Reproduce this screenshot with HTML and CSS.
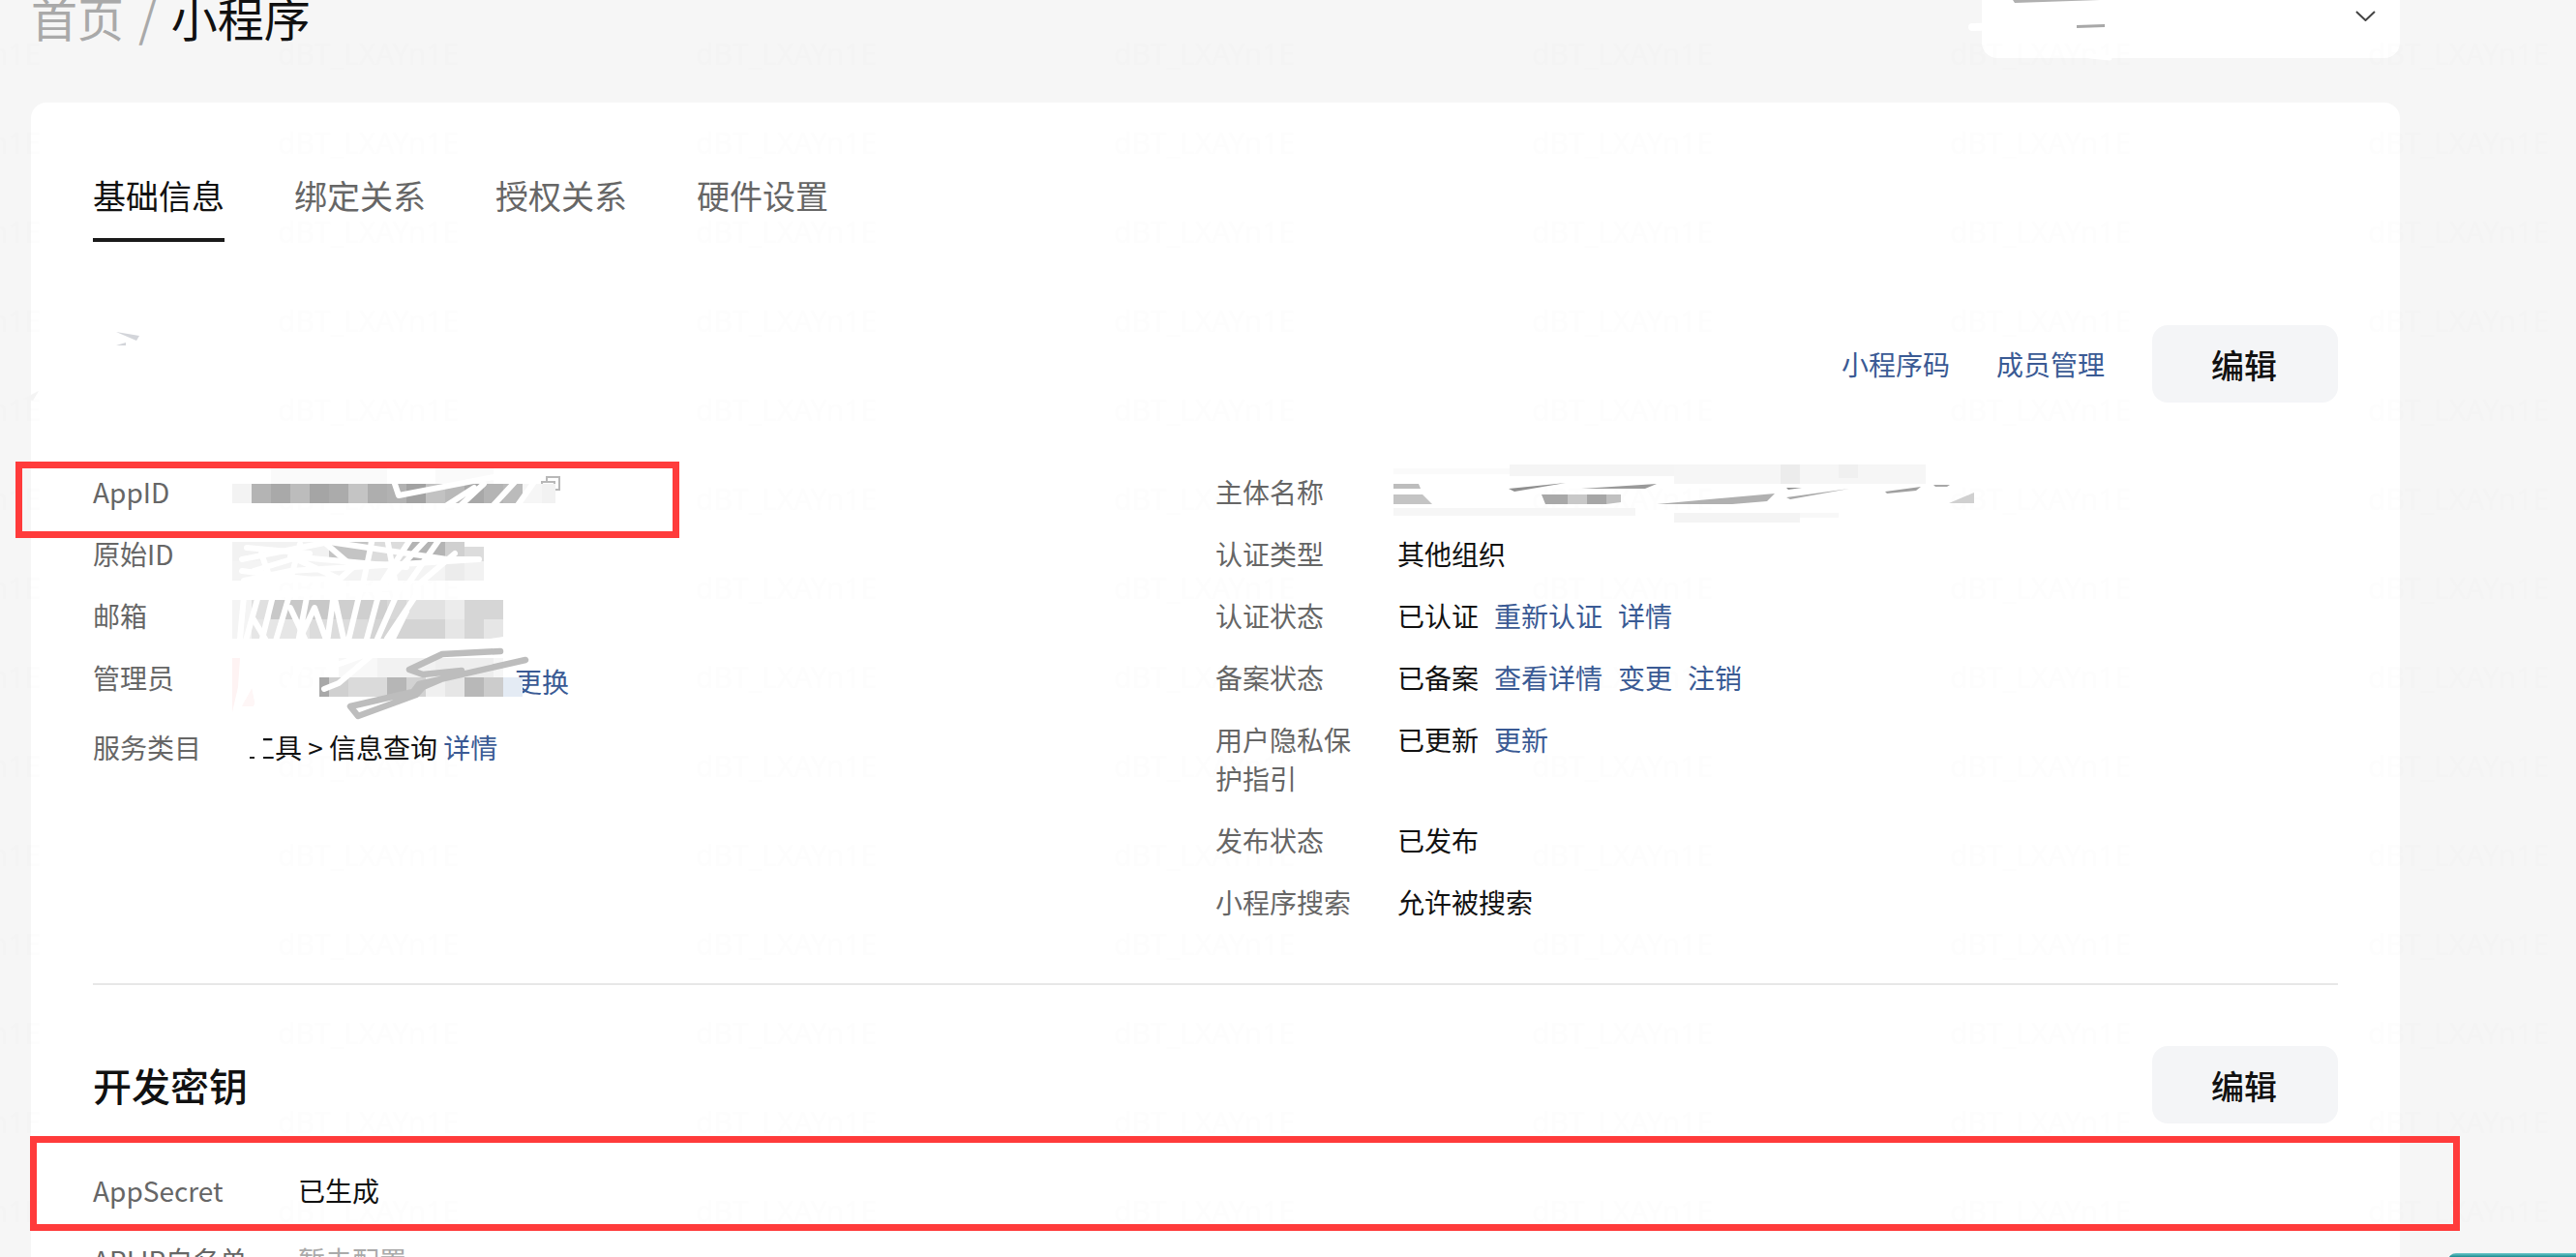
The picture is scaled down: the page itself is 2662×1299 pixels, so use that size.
FILE: index.html
```html
<!DOCTYPE html>
<html lang="zh-CN">
<head>
<meta charset="utf-8">
<title>小程序</title>
<link rel="stylesheet" href="styles.css">
</head>
<body>
<div class="page">
  <header class="topbar">
    <div class="crumb"><span class="crumb-home">首页</span><span class="crumb-sep">/</span><span class="crumb-now">小程序</span></div>
    <div class="select">
      <svg class="chevron" viewBox="0 0 21 11" width="21" height="11"><path d="M1 1l9.500 9L20 1" fill="none" stroke="#444" stroke-width="2"/></svg>
    </div>
  </header>
  <main class="card">
    <nav class="tabs">
      <a class="tab tab-active">基础信息</a>
      <a class="tab">绑定关系</a>
      <a class="tab">授权关系</a>
      <a class="tab">硬件设置</a>
    </nav>
    <div class="actions">
      <a class="link">小程序码</a>
      <a class="link">成员管理</a>
      <button class="btn btn-action">编辑</button>
    </div>
    <section class="info">
      <div class="col">
        <div class="row"><span class="label label-l">AppID</span><span class="value"></span></div>
        <div class="row"><span class="label label-l">原始ID</span><span class="value"></span></div>
        <div class="row"><span class="label label-l">邮箱</span><span class="value"></span></div>
        <div class="row row-admin"><span class="label label-l">管理员</span><span class="value value-admin"><a class="link">更换</a></span></div>
        <div class="row"><span class="label label-l">服务类目</span><span class="value value-cat">工具 &gt; 信息查询 <a class="link">详情</a></span></div>
      </div>
      <div class="col">
        <div class="row"><span class="label label-r">主体名称</span><span class="value"></span></div>
        <div class="row"><span class="label label-r">认证类型</span><span class="value">其他组织</span></div>
        <div class="row"><span class="label label-r">认证状态</span><span class="value">已认证<a class="link link-in">重新认证</a><a class="link link-in">详情</a></span></div>
        <div class="row"><span class="label label-r">备案状态</span><span class="value">已备案<a class="link link-in">查看详情</a><a class="link link-in">变更</a><a class="link link-in">注销</a></span></div>
        <div class="row"><span class="label label-r">用户隐私保护指引</span><span class="value">已更新<a class="link link-in">更新</a></span></div>
        <div class="row"><span class="label label-r">发布状态</span><span class="value">已发布</span></div>
        <div class="row"><span class="label label-r">小程序搜索</span><span class="value">允许被搜索</span></div>
      </div>
    </section>
    <hr class="divider">
    <div class="section-head">
      <h2 class="section-title">开发密钥</h2>
      <button class="btn">编辑</button>
    </div>
    <div class="keys">
      <div class="row row-key"><span class="label label-k">AppSecret</span><span class="value">已生成</span></div>
      <div class="row row-key"><span class="label label-k">API IP白名单</span><span class="value value-muted">暂未配置</span></div>
    </div>
  </main>
</div>

<svg class="overlay" viewBox="0 0 2662 1299" width="2662" height="1299" aria-hidden="true">
  <defs>
    <pattern id="wm" x="-145" y="0" width="432" height="92" patternUnits="userSpaceOnUse">
      <text class="wm-text" x="0" y="67">dBT_LXAYn1E</text>
    </pattern>
  </defs>
  <rect width="2662" height="1299" fill="url(#wm)"/>

  <!-- 小程序名称 -->
  <path d="M120 343l24 4l-3 5zM120 357l10-3v3z" fill="#d3d5da"/>
  <path d="M24 412L40 404L34 414Z" fill="#f4f4f4"/>

  <!-- AppID -->
  <path d="M565 497V493H578V506H574M560 498H573V511H560Z" fill="none" stroke="#b8b8b8" stroke-width="2"/>
  <g>
    <rect x="280" y="480" width="120" height="20" fill="#fafafa"/>
    <rect x="450" y="480" width="60" height="20" fill="#fafafa"/>
    <rect x="240" y="500" width="20" height="20" fill="#f3f3f3"/><rect x="260" y="500" width="20" height="20" fill="#b4b4b4"/><rect x="280" y="500" width="20" height="20" fill="#a9a9a9"/><rect x="300" y="500" width="20" height="20" fill="#bcbcbc"/><rect x="320" y="500" width="20" height="20" fill="#a5a5a5"/><rect x="340" y="500" width="20" height="20" fill="#ababab"/><rect x="360" y="500" width="20" height="20" fill="#c4c4c4"/><rect x="380" y="500" width="20" height="20" fill="#aeaeae"/><rect x="400" y="500" width="20" height="20" fill="#b2b2b2"/><rect x="420" y="500" width="20" height="20" fill="#a2a2a2"/><rect x="440" y="500" width="20" height="20" fill="#c2c2c2"/><rect x="460" y="500" width="20" height="20" fill="#b9b9b9"/><rect x="480" y="500" width="20" height="20" fill="#a8a8a8"/><rect x="500" y="500" width="20" height="20" fill="#b4b4b4"/><rect x="520" y="500" width="20" height="20" fill="#bbb"/><rect x="540" y="500" width="20" height="20" fill="#f6f6f6"/><rect x="560" y="500" width="14" height="20" fill="#f2f2f2"/>
  </g>
  <g fill="none" stroke="#fff" stroke-linecap="round" stroke-linejoin="round">
    <path d="M403 485L412 512L546 486" stroke-width="6"/>
    <path d="M462 522L490 504M472 526L500 500M510 522L545 484M535 522L552 498" stroke-width="6"/>
  </g>

  <!-- 原始ID -->
  <g>
    <rect x="240" y="560" width="100" height="20" fill="#f2f2f2"/><rect x="340" y="560" width="40" height="20" fill="#c4c4c4"/><rect x="380" y="560" width="40" height="20" fill="#dcdcdc"/><rect x="420" y="560" width="40" height="20" fill="#b4b4b4"/><rect x="460" y="560" width="20" height="20" fill="#d0d0d0"/><rect x="480" y="565" width="20" height="15" fill="#dcdcdc"/>
    <rect x="240" y="580" width="220" height="20" fill="#f4f4f4"/><rect x="460" y="580" width="20" height="20" fill="#ececec"/><rect x="480" y="580" width="20" height="20" fill="#f2f2f2"/>
  </g>
  <g fill="none" stroke="#fff" stroke-width="6" stroke-linecap="round" stroke-linejoin="round">
    <path d="M250 578L340 560L462 578L495 578L300 590L252 600L350 598L300 575L420 586"/>
    <path d="M330 556L365 586L345 604M385 556L375 604M400 556L410 610M425 556L390 610M440 558L395 606M455 556L420 606M470 572L430 606M255 566L320 572L262 590"/>
    <path d="M250 590L330 600M270 572L280 600M310 562L300 600"/>
  </g>
  <g stroke="#fff" stroke-width="7" fill="none" stroke-linecap="round">
    <path d="M290 614L420 606"/>
  </g>

  <!-- 邮箱 -->
  <g>
    <rect x="240" y="620" width="20" height="20" fill="#f4f4f4"/><rect x="260" y="620" width="20" height="20" fill="#e0e0e0"/><rect x="280" y="620" width="60" height="20" fill="#c8c8c8"/><rect x="340" y="620" width="60" height="20" fill="#cfcfcf"/><rect x="400" y="620" width="20" height="20" fill="#d8d8d8"/><rect x="420" y="620" width="40" height="20" fill="#e2e2e2"/><rect x="460" y="620" width="20" height="20" fill="#ececec"/><rect x="480" y="620" width="40" height="20" fill="#d6d6d6"/>
    <rect x="240" y="640" width="20" height="20" fill="#f4f4f4"/><rect x="260" y="640" width="60" height="20" fill="#e6e6e6"/><rect x="320" y="640" width="60" height="20" fill="#dcdcdc"/><rect x="380" y="640" width="80" height="20" fill="#d4d4d4"/><rect x="460" y="640" width="20" height="20" fill="#e6e6e6"/><rect x="480" y="640" width="20" height="20" fill="#d6d6d6"/><rect x="500" y="640" width="20" height="20" fill="#e6e6e6"/>
  </g>
  <g fill="none" stroke="#fff" stroke-width="6" stroke-linecap="round" stroke-linejoin="round">
    <path d="M252 616L248 660M268 612L254 662M283 612L270 664M300 612L285 662M318 612L308 664L325 628L338 664L345 614L355 660M372 612L360 662M392 612L378 664M412 610L390 660M432 612L400 660M420 632L405 662"/>
    <path d="M262 640L275 662M300 628L315 660"/>
  </g>
  <path d="M480 664L520 658V666H480Z" fill="#fff"/>

  <!-- 管理员 -->
  <path d="M240 680h8l-2 30l-6 26z" fill="#fef3f3"/>
  <path d="M250 730l10-20l4 20z" fill="#fef6f6"/>
  <g>
    <rect x="350" y="680" width="40" height="20" fill="#f8f8f8"/><rect x="390" y="680" width="60" height="20" fill="#f2f2f2"/><rect x="450" y="680" width="60" height="20" fill="#eeeeee"/><rect x="510" y="680" width="10" height="20" fill="#f6f6f6"/>
    <rect x="330" y="700" width="10" height="20" fill="#a8a8a8"/><rect x="340" y="700" width="20" height="20" fill="#d0d0d0"/><rect x="360" y="700" width="40" height="20" fill="#dadada"/><rect x="400" y="700" width="20" height="20" fill="#b6b6b6"/><rect x="420" y="700" width="20" height="20" fill="#d2d2d2"/><rect x="440" y="700" width="20" height="20" fill="#f0f0f0"/><rect x="460" y="700" width="20" height="20" fill="#e6e6e6"/><rect x="480" y="700" width="20" height="20" fill="#b8b8b8"/><rect x="500" y="700" width="20" height="20" fill="#cccccc"/><rect x="520" y="700" width="20" height="20" fill="#e4ebf4"/>
  </g>
  <g fill="none" stroke="#fff" stroke-width="6" stroke-linecap="round" stroke-linejoin="round">
    <path d="M340 690L390 672L350 706L335 712M300 664L262 736M280 668L252 720M320 668L290 730"/>
  </g>
  <path d="M517 673L457 676L423 692L437 697L477 693L437 710L430 718L370 740L362 730L427 715L433 707L543 682" fill="none" stroke="#bdbdbd" stroke-width="6.500" stroke-linecap="round" stroke-linejoin="round"/>

  <!-- 服务类目 -->
  <rect x="252" y="752" width="20" height="40" fill="#fff"/>
  <rect x="272" y="766" width="13" height="14" fill="#fff"/>
  <rect x="258" y="782" width="5" height="2" fill="#222"/>

  <!-- 主体名称 -->
  <g>
    <rect x="1440" y="484" width="120" height="6" fill="#fafafa"/>
    <rect x="1560" y="480" width="170" height="12" fill="#f5f5f5"/>
    <rect x="1730" y="480" width="260" height="20" fill="#f6f6f6"/>
    <rect x="1840" y="480" width="20" height="20" fill="#ececec"/>
    <rect x="1900" y="480" width="20" height="14" fill="#f0f0f0"/>
    <rect x="1440" y="525" width="250" height="8" fill="#f6f6f6"/>
    <rect x="1730" y="530" width="130" height="10" fill="#f4f4f4"/>
    <rect x="1860" y="530" width="40" height="5" fill="#f8f8f8"/>
    <path d="M1440 500H1466L1468 505H1440Z" fill="#bdbdbd"/>
    <path d="M1440 511H1470L1480 521H1440Z" fill="#c4c4c4"/>
    <path d="M1559 505L1618 499L1565 508Z" fill="#8f8f8f"/>
    <path d="M1634 505L1712 500L1700 505Z" fill="#9a9a9a"/>
    <path d="M1593 511H1620V521H1597Z" fill="#a8a8a8"/>
    <rect x="1620" y="511" width="20" height="10" fill="#c8c8c8"/>
    <rect x="1640" y="511" width="20" height="10" fill="#a6a6a6"/>
    <path d="M1660 511H1675V519L1660 521Z" fill="#c0c0c0"/>
    <path d="M1712 521L1834 510L1826 518L1790 521Z" fill="#b0b0b0"/>
    <path d="M1846 504H1862L1848 506Z" fill="#909090"/>
    <path d="M1846 514L1911 505L1850 516Z" fill="#a8a8a8"/>
    <path d="M1948 508L1985 503L1980 507L1950 510Z" fill="#a0a0a0"/>
    <path d="M1998 501H2015L2012 503H2000Z" fill="#a8a8a8"/>
    <path d="M2014 520L2040 509V520Z" fill="#d0d0d0"/>
  </g>

  <!-- 账号选择 -->
  <path d="M2080 0H2170L2082 3Z" fill="#b0b0b0"/>
  <path d="M2146 26L2175 25V28L2146 29Z" fill="#a8a8a8"/>
  <g fill="none" stroke="#fff" stroke-linecap="round" stroke-width="8">
    <path d="M2038 28L2080 27M2052 8L2056 22"/>
    <path d="M2160 58L2180 60" stroke-width="5"/>
  </g>
</svg>

<div class="mark mark-appid"></div>
<div class="mark mark-secret"></div>
<div class="corner-bar"></div>
</body>
</html>
```
FILE: styles.css
```css
* { box-sizing: border-box; }
html, body { margin: 0; padding: 0; height: 1299px; overflow: hidden; }
body {
  position: relative;
  background: #f6f6f6;
  color: #111;
  font-family: "Noto Sans CJK SC", "Noto Sans", sans-serif;
  font-size: 28px;
}
.page { padding: 0 182px 0 32px; }
.topbar { display: flex; justify-content: space-between; align-items: flex-start; height: 60px; margin-bottom: 46px; }
.crumb { display: flex; margin-top: -3px; font-size: 48px; line-height: 40px; }
.crumb-home, .crumb-sep { color: #a9a9a9; }
.crumb-sep { margin: 0 15px; }
.crumb-now { color: #111; }
.select {
  display: flex;
  justify-content: flex-end;
  width: 432px;
  height: 60px;
  padding: 11px 25px 0 0;
  background: #fff;
  border-radius: 0 0 16px 16px;
}
.chevron { display: block; }
.card { height: 1193px; padding: 0 64px; background: #fff; border-radius: 16px 16px 0 0; }
.tabs { display: flex; gap: 72px; padding-top: 73px; }
.tab { height: 71px; line-height: 46px; font-size: 34px; color: #666; }
.tab-active { color: #111; border-bottom: 4px solid #1a1a1a; }
.actions { display: flex; justify-content: flex-end; align-items: center; gap: 48px; margin-top: 86px; }
.link { color: #3a5a94; }
.btn {
  width: 192px;
  height: 80px;
  padding: 0 2px 0 0;
  border: 0;
  border-radius: 16px;
  background: #f4f5f7;
  color: #111;
  font: 500 34px "Noto Sans CJK SC", sans-serif;
}
.btn-action { margin-left: 1px; }
.info { display: grid; grid-template-columns: 1160px 1fr; margin-top: 72px; }
.row { display: flex; margin-bottom: 24px; line-height: 40px; }
.label { flex: none; color: #666; }
.label-l { width: 144px; }
.label-r { width: 188px; padding-right: 21px; }
.label-k { width: 212px; }
.value { flex: 1; min-height: 40px; color: #111; }
.link-in { margin-left: 16px; }
.row-admin { margin-bottom: 28px; }
.value-admin { padding: 4px 0 0 292px; }
.value-cat { padding-left: 16px; }
.divider { height: 2px; margin: 40px 0 0; border: 0; background: #e7e7e7; }
.section-head { display: flex; justify-content: space-between; margin-top: 63px; }
.section-title { margin: 0; padding-top: 3px; font-size: 40px; line-height: 74px; font-weight: 500; color: #111; }
.keys { margin-top: 49px; }
.row-key { margin-bottom: 32px; }
.value-muted { color: #aaa; }
.overlay { position: absolute; top: 0; left: 0; pointer-events: none; }
.wm-text { font-family: "Noto Sans", sans-serif; font-size: 30px; fill: rgba(0, 0, 0, 0.007); }
.mark { position: absolute; border: 7px solid #ff3b3b; pointer-events: none; }
.mark-appid { left: 16px; top: 477px; width: 686px; height: 79px; }
.mark-secret { left: 31px; top: 1174px; width: 2511px; height: 98px; }
.corner-bar {
  position: absolute;
  left: 2530px;
  top: 1295px;
  width: 132px;
  height: 8px;
  border-radius: 8px 0 0 0;
  background: linear-gradient(#6fc9cb, #0a7f84 60%);
}
```
